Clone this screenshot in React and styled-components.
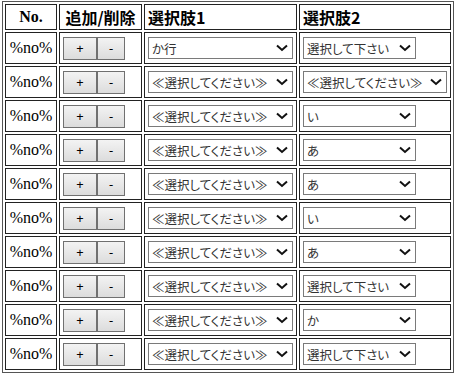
import React from 'react'
import styled, { createGlobalStyle } from 'styled-components'

const GlobalStyle = createGlobalStyle`
  body {
    margin: 0;
    background: #fff;
    font-family: "Liberation Serif", "Noto Sans CJK JP", serif;
  }
`

const Table = styled.table`
  margin: 1px 0 0 2px;
  border: 1px solid #555;
  border-spacing: 2px;
  border-collapse: separate;
`

const Th = styled.th`
  width: ${({ w }) => w}px;
  height: 24px;
  padding: 0 3px;
  border: 1px solid #222;
  font-family: ${({ jp }) => (jp ? '"Noto Sans CJK JP", sans-serif' : '"Liberation Serif", serif')};
  font-size: 16px;
  font-weight: bold;
  color: #000;
  text-align: ${({ left }) => (left ? 'left' : 'center')};
  white-space: nowrap;
`

const Td = styled.td`
  height: 30px;
  padding: 0 3px;
  border: 1px solid #222;
  font-size: 16px;
  text-align: ${({ center }) => (center ? 'center' : 'left')};
  white-space: nowrap;
`

const BtnGroup = styled.div`
  display: flex;
`

const Btn = styled.button`
  width: ${({ w }) => w}px;
  height: 23px;
  margin: 0;
  padding: 0;
  border: 1px solid #707070;
  background: linear-gradient(#f3f3f3, #dcdcdc);
  font-family: "Noto Sans", sans-serif;
  font-size: 13px;
  color: #000;
`

const SelectWrap = styled.div`
  position: relative;
  display: inline-block;
  width: ${({ w }) => w}px;
  height: 22px;
  vertical-align: middle;
`

const Select = styled.select`
  appearance: none;
  width: 100%;
  height: 100%;
  margin: 0;
  padding: 0 18px 0 3px;
  border: 1px solid #7a7a7a;
  border-radius: 0;
  background: #fff;
  font-family: "Noto Sans CJK JP", sans-serif;
  font-feature-settings: "palt";
  font-size: 12.5px;
  color: #333;
  outline: none;
`

const Chevron = styled.svg`
  position: absolute;
  right: 5px;
  top: 7px;
  pointer-events: none;
`

const OPT1 = ['≪選択してください≫', 'か行', 'さ行']
const OPT2 = ['選択して下さい', 'あ', 'い', 'か']
const OPT2L = ['≪選択してください≫', 'あ', 'い']

const rows = [
  ['か行', '選択して下さい'],
  ['≪選択してください≫', '≪選択してください≫'],
  ['≪選択してください≫', 'い'],
  ['≪選択してください≫', 'あ'],
  ['≪選択してください≫', 'あ'],
  ['≪選択してください≫', 'い'],
  ['≪選択してください≫', 'あ'],
  ['≪選択してください≫', '選択して下さい'],
  ['≪選択してください≫', 'か'],
  ['≪選択してください≫', '選択して下さい'],
]

function Dropdown({ w, value, options }) {
  return (
    <SelectWrap w={w}>
      <Select defaultValue={value}>
        {options.map((o) => (
          <option key={o}>{o}</option>
        ))}
      </Select>
      <Chevron width="12" height="8" viewBox="0 0 12 8">
        <path d="M1 1.5 L6 6 L11 1.5" fill="none" stroke="#111" strokeWidth="2" />
      </Chevron>
    </SelectWrap>
  )
}

export default function App() {
  return (
    <>
      <GlobalStyle />
      <Table>
        <thead>
          <tr>
            <Th w={44}>No.</Th>
            <Th w={75} jp>追加/削除</Th>
            <Th w={145} jp left>選択肢1</Th>
            <Th w={142} jp left>選択肢2</Th>
          </tr>
        </thead>
        <tbody>
          {rows.map(([a, b], i) => {
            const long = b.startsWith('≪')
            return (
              <tr key={i}>
                <Td center>%no%</Td>
                <Td>
                  <BtnGroup>
                    <Btn w={34}>+</Btn>
                    <Btn w={28}>-</Btn>
                  </BtnGroup>
                </Td>
                <Td>
                  <Dropdown w={145} value={a} options={OPT1} />
                </Td>
                <Td>
                  <Dropdown w={long ? 144 : 113} value={b} options={long ? OPT2L : OPT2} />
                </Td>
              </tr>
            )
          })}
        </tbody>
      </Table>
    </>
  )
}
